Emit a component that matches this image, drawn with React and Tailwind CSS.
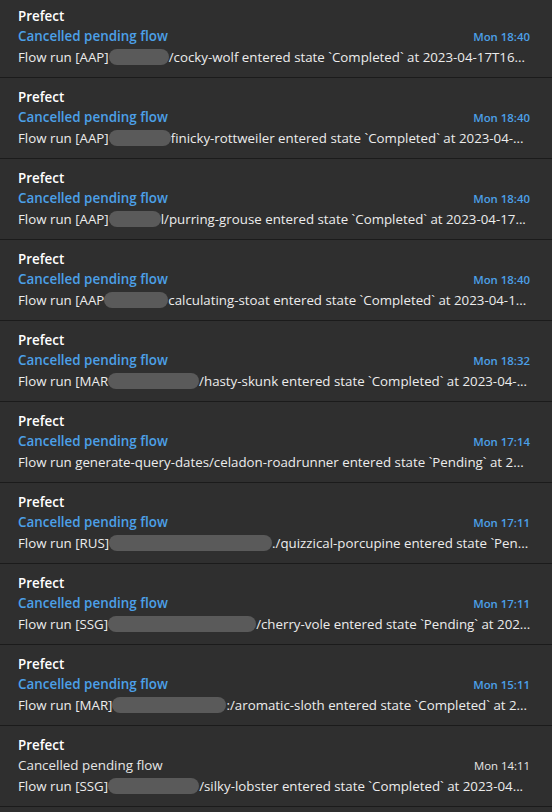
import React from 'react';

const notifications = [
    { time: 'Mon 18:40', pre: 'Flow run [AAP]', blur: 60, post: '/cocky-wolf entered state `Completed` at 2023-04-17T16...', unread: true },
    { time: 'Mon 18:40', pre: 'Flow run [AAP]', blur: 62, post: 'finicky-rottweiler entered state `Completed` at 2023-04-...', unread: true },
    { time: 'Mon 18:40', pre: 'Flow run [AAP]', blur: 52, post: 'l/purring-grouse entered state `Completed` at 2023-04-17...', unread: true },
    { time: 'Mon 18:40', pre: 'Flow run [AAP', blur: 64, post: 'calculating-stoat entered state `Completed` at 2023-04-1...', unread: true },
    { time: 'Mon 18:32', pre: 'Flow run [MAR', blur: 91, post: '/hasty-skunk entered state `Completed` at 2023-04-...', unread: true },
    { time: 'Mon 17:14', pre: 'Flow run generate-query-dates/celadon-roadrunner entered state `Pending` at 2...', blur: 0, post: '', unread: true },
    { time: 'Mon 17:11', pre: 'Flow run [RUS]', blur: 163, post: './quizzical-porcupine entered state `Pen...', unread: true },
    { time: 'Mon 17:11', pre: 'Flow run [SSG]', blur: 148, post: '/cherry-vole entered state `Pending` at 202...', unread: true },
    { time: 'Mon 15:11', pre: 'Flow run [MAR]', blur: 114, post: ':/aromatic-sloth entered state `Completed` at 2...', unread: true },
    { time: 'Mon 14:11', pre: 'Flow run [SSG]', blur: 91, post: '/silky-lobster entered state `Completed` at 2023-04...', unread: false },
];

const NotificationItem = ({ item }) => {
    const accent = item.unread ? 'text-[#4ca0e8]' : 'text-[#e6e6e6]';
    return (
        <div className="h-[81px] border-b border-[#1b1b1b] pl-[18px] pr-[22px] pt-[9px]">
            <div className="text-[13.4px] leading-[20px] font-semibold text-white">Prefect</div>
            <div className="flex items-baseline justify-between leading-[21px]">
                <span className={`text-[13.4px] ${item.unread ? 'font-semibold' : 'font-normal'} ${accent}`}>
                    Cancelled pending flow
                </span>
                <span className={`text-[11.4px] ${item.unread ? 'font-semibold' : 'font-normal'} ${accent}`}>
                    {item.time}
                </span>
            </div>
            <div className="overflow-hidden whitespace-nowrap text-[13.3px] leading-[20px] text-[#ececec]">
                {item.pre}
                {item.blur > 0 && (
                    <span
                        className="inline-block h-[16px] rounded-full bg-[#5a5a5a] align-[-3px] blur-[0.5px]"
                        style={{ width: item.blur }}
                    />
                )}
                {item.post}
            </div>
        </div>
    );
};

const App = () => {
    return (
        <div className="h-[812px] w-[552px] overflow-hidden bg-[#2f2f2f]" style={{ fontFamily: '"Open Sans", "Noto Sans", sans-serif' }}>
            <div className="-mt-[3px]">
                {notifications.map((item, i) => (
                    <NotificationItem key={i} item={item} />
                ))}
            </div>
        </div>
    );
};

export default App;
